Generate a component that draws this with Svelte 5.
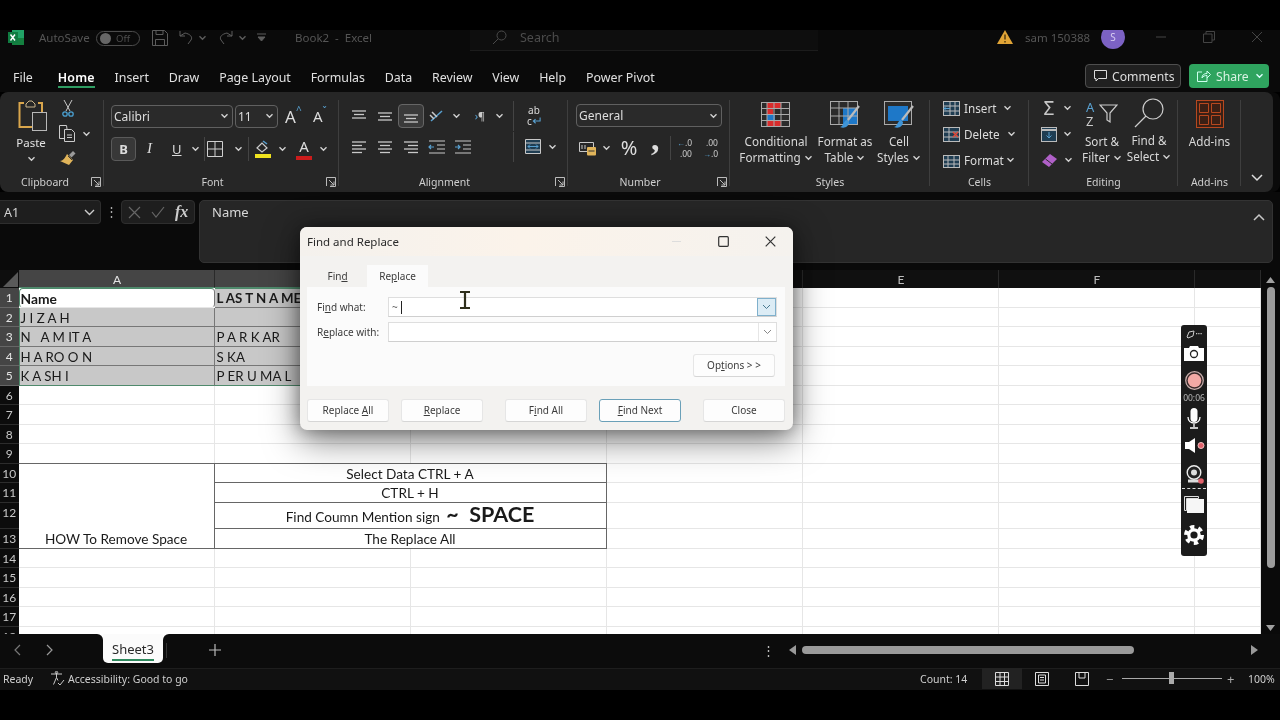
<script>
  const letters = ['A', 'B', 'C', 'D', 'E', 'F', ''];
  const rowNos = Array.from({ length: 18 }, (_, i) => i + 1);
  const names = {
    1: ['Name', 'L AS T N A ME'],
    2: ['J I Z A H', ''],
    3: ['N   A M IT A', 'P A R K AR'],
    4: ['H A RO O N', 'S KA'],
    5: ['K A SH I', 'P ER U MA L']
  };
  const tableRows = {
    10: 'Select Data CTRL + A',
    11: 'CTRL + H',
    13: 'The Replace All'
  };
  const tailCols = ['c', 'd', 'e', 'f', 'g'];
  const plainCols = ['a', 'b', 'c', 'd', 'e', 'f', 'g'];
  const tabs = ['Home', 'Insert', 'Draw', 'Page Layout', 'Formulas', 'Data', 'Review', 'View', 'Help', 'Power Pivot'];
</script>

{#snippet chev(col = '#d0d0d0')}
  <svg class="chev" width="9" height="6" viewBox="0 0 9 6"><path d="M1.5 1.2l3 3 3-3" fill="none" stroke={col} stroke-width="1.4" /></svg>
{/snippet}

{#snippet launcher()}
  <svg class="launcher" width="10" height="10" viewBox="0 0 10 10"><path d="M.5 9V.5H9.5V9.5H4M3 3l5 5M8 4.5V8H4.5" fill="none" stroke="#bbb" stroke-width="1" /></svg>
{/snippet}

{#snippet lines(rows)}
  <svg width="20" height="16" viewBox="0 0 20 16">
    {#each rows as r}
      <path d={`M${r[0]} ${r[2]}H${r[1]}`} stroke="#c8c8c8" stroke-width="1.3" />
    {/each}
  </svg>
{/snippet}

<div class="app">
  <header class="titlebar">
    <svg class="xl" width="16" height="15" viewBox="0 0 16 15"><rect x="4" width="12" height="15" fill="#21a366" /><rect x="4" y="8" width="12" height="7" fill="#14803f" /><rect width="10" height="11" y="2" fill="#107c41" /><path d="M2.5 4.5l4.5 6M7 4.5l-4.5 6" stroke="#fff" stroke-width="1.4" /></svg>
    <span class="dim autosave">AutoSave</span>
    <span class="toggle"><i></i><b>Off</b></span>
    <svg class="t-save" width="16" height="16" viewBox="0 0 16 16"><path d="M.5.5h12l3 3v12H.5zM4 .5v4h7v-4M3.500 15.500v-6h9v6" fill="none" stroke="#5c5c5c" /></svg>
    <svg class="t-undo" width="14" height="15" viewBox="0 0 14 15"><path d="M1 1v5h5M1 6l5-3c5 1 8 4 6 7l-3 4" fill="none" stroke="#5c5c5c" /></svg>
    <span class="t-chev">{@render chev('#5c5c5c')}</span>
    <svg class="t-redo" width="14" height="15" viewBox="0 0 14 15"><path d="M13 1v5H8M13 6L8 3C3 4 0 7 2 10l3 4" fill="none" stroke="#5c5c5c" /></svg>
    <span class="t-chev">{@render chev('#5c5c5c')}</span>
    <svg class="t-more" width="11" height="9" viewBox="0 0 11 9"><path d="M1 1h9M2 4l3.500 4L9 4z" stroke="#5c5c5c" fill="#5c5c5c" /></svg>
    <span class="dim doc">Book2 &nbsp;-&nbsp; Excel</span>
    <div class="search">
      <svg width="15" height="15" viewBox="0 0 15 15"><circle cx="9.500" cy="5.500" r="4.500" fill="none" stroke="#4a4a4a" /><path d="M6 9l-5 5" stroke="#4a4a4a" /></svg>
      <span>Search</span>
    </div>
    <svg class="warn" width="16" height="14" viewBox="0 0 16 14"><path d="M8 0l8 14H0z" fill="#e0a436" /><path d="M8 4.500v5M8 11v1.500" stroke="#3c2a0a" stroke-width="1.300" /></svg>
    <span class="dim user">sam 150388</span>
    <span class="avatar">S</span>
    <span class="winbtns">
      <svg width="12" height="12" viewBox="0 0 12 12"><path d="M1 6h10" stroke="#444" /></svg>
      <svg width="12" height="12" viewBox="0 0 12 12"><path d="M.5 3h8.500v8.500H.5zM3 3V.5h8.500V9H9" fill="none" stroke="#444" /></svg>
      <svg width="12" height="12" viewBox="0 0 12 12"><path d="M1 1l10 10M11 1L1 11" stroke="#444" /></svg>
    </span>
  </header>

  <nav class="tabs">
    <span class="file">File</span>
    {#each tabs as t}
      <span class:home={t === 'Home'}>{t}</span>
    {/each}
    <div class="tab-actions">
      <button class="comments">
        <svg width="13" height="12" viewBox="0 0 13 12"><path d="M.5.5h12v8H4.500L2 11V8.500H.5z" fill="none" stroke="#ddd" /></svg>
        Comments
      </button>
      <button class="share">
        <svg width="14" height="12" viewBox="0 0 14 12"><path d="M5 2H.5v9.500h9.500V8M5 8c0-3 2-4.500 5-4.500V1l3.500 3.500L10 8V5.500C8 5.500 6 6 5 8z" fill="none" stroke="#cfe" /></svg>
        Share
        <span class="share-chev">{@render chev('#dff')}</span>
      </button>
    </div>
  </nav>

  <section class="ribbon">
    <div class="group launch clipboard">
      <div class="gbody clipbody">
        <div class="paste">
          <svg width="30" height="31" viewBox="0 0 30 31"><path d="M6 3H1.500v24H14" fill="none" stroke="#d9a64c" stroke-width="2" /><path d="M20 3h4v9" fill="none" stroke="#d9a64c" stroke-width="2" /><path d="M8 4l3-3h3l3 3v3H8z" fill="#262626" stroke="#c9b48a" /><rect x="14.500" y="12.500" width="14" height="18" fill="#2a2a2a" stroke="#b8b8b8" /></svg>
          <span>Paste</span>
          {@render chev()}
        </div>
        <div class="clip-small">
          <svg width="12" height="17" viewBox="0 0 12 17"><path d="M2 0l6 11M10 0L4 11" stroke="#c8c8c8" /><circle cx="3" cy="14" r="2.200" fill="none" stroke="#4a9fd0" stroke-width="1.300" /><circle cx="9" cy="14" r="2.200" fill="none" stroke="#4a9fd0" stroke-width="1.300" /></svg>
          <span class="copyrow">
            <svg width="17" height="17" viewBox="0 0 17 17"><path d="M5 13.500H.5v-13h7L8 4" fill="none" stroke="#ccc" /><path d="M5.500 4.500h7l3 3v9h-10zM8 10h5M8 12.500h5" fill="none" stroke="#ccc" /></svg>
            {@render chev()}
          </span>
          <svg width="17" height="15" viewBox="0 0 17 15"><path d="M10 4l4-4 2.500 2.500-4 4z" fill="#9a9a9a" /><path d="M8 3l6 6-4 5-9-4c3 0 5-3 7-7z" fill="#e0b45a" /><path d="M9 5l4 4" stroke="#3a3a3a" /></svg>
        </div>
      </div>
      <div class="glabel">Clipboard</div>
      {@render launcher()}
    </div>

    <div class="group launch font">
      <div class="gbody stack">
        <div class="frow r1">
          <span class="sel-box fontname">Calibri {@render chev()}</span>
          <span class="sel-box fontsize">11 {@render chev()}</span>
          <span class="grow-a">A<sup>^</sup></span>
          <span class="shrink-a">A<sup>ˇ</sup></span>
        </div>
        <div class="frow r2">
          <span class="bold-btn">B</span>
          <span class="ital">I</span>
          <span class="under">U</span>
          {@render chev()}
          <span class="vsep first"></span>
          <svg class="borders" width="16" height="16" viewBox="0 0 16 16"><path d="M.5.5h15v15H.5zM.5 8h15M8 .5v15" fill="none" stroke="#d0d0d0" /></svg>
          {@render chev()}
          <span class="vsep second"></span>
          <svg class="fill" width="18" height="18" viewBox="0 0 18 18"><path d="M3 8l5-5 5 5-5 4z" fill="none" stroke="#ccc" stroke-width="1.200" /><path d="M9 1l4 3" stroke="#58a0d0" stroke-width="1.500" /><rect x="1" y="14" width="16" height="4" fill="#f0e31f" /></svg>
          {@render chev()}
          <span class="color-a">A<i></i></span>
          {@render chev()}
        </div>
      </div>
      <div class="glabel">Font</div>
      {@render launcher()}
    </div>

    <div class="group launch align">
      <div class="gbody stack alignbody">
        <div class="arow">
          <span class="w26">{@render lines([[3, 17, 3], [5, 15, 6.500], [3, 17, 10]])}</span>
          <span class="w26">{@render lines([[3, 17, 5], [5, 15, 8.500], [3, 17, 12]])}</span>
          <span class="w26 active">{@render lines([[3, 17, 7], [5, 15, 10.500], [3, 17, 14]])}</span>
          <span class="w26">
            <svg width="18" height="16" viewBox="0 0 18 16"><path d="M3 13L14 3" stroke="#58a0d0" stroke-width="1.500" /><path d="M4 4l5 5M2 7l4 4" stroke="#c8c8c8" stroke-width="1.500" /></svg>
          </span>
          <span class="w12">{@render chev()}</span>
          <span class="w26 gap5 rtl"><em>›</em>¶</span>
          <span class="w12">{@render chev()}</span>
          <span class="vsep asep"></span>
          <span class="w26 wrap">ab<br />c<svg width="9" height="8" viewBox="0 0 10 8"><path d="M9 0v4H2M4 2L1.500 4 4 6.500" fill="none" stroke="#58a0d0" stroke-width="1.200" /></svg></span>
        </div>
        <div class="arow">
          <span class="w26">{@render lines([[3, 17, 3], [3, 13, 6.500], [3, 17, 10], [3, 13, 13.500]])}</span>
          <span class="w26">{@render lines([[3, 17, 3], [5, 15, 6.500], [3, 17, 10], [5, 15, 13.500]])}</span>
          <span class="w26">{@render lines([[3, 17, 3], [7, 17, 6.500], [3, 17, 10], [7, 17, 13.500]])}</span>
          <span class="w26">
            <svg width="18" height="16" viewBox="0 0 18 16"><path d="M1 2h16M9 6h8M9 10h8M1 14h16" stroke="#c8c8c8" stroke-width="1.200" /><path d="M6 8H1M3 6L1 8l2 2" fill="none" stroke="#58a0d0" stroke-width="1.200" /></svg>
          </span>
          <span class="w26">
            <svg width="18" height="16" viewBox="0 0 18 16"><path d="M1 2h16M9 6h8M9 10h8M1 14h16" stroke="#c8c8c8" stroke-width="1.200" /><path d="M1 8h5M4 6l2 2-2 2" fill="none" stroke="#58a0d0" stroke-width="1.200" /></svg>
          </span>
          <span class="vsep asep2"></span>
          <span class="w26">
            <svg width="16" height="15" viewBox="0 0 16 15"><path d="M.5.5h15v14H.5z" fill="#1f3d52" stroke="#c8c8c8" /><path d="M.5 4h15M.5 11h15" stroke="#c8c8c8" /><path d="M3 7.500h10M5 5.500l-2 2 2 2M11 5.500l2 2-2 2" fill="none" stroke="#58a0d0" /></svg>
          </span>
          <span class="w12">{@render chev()}</span>
        </div>
      </div>
      <div class="glabel">Alignment</div>
      {@render launcher()}
    </div>

    <div class="group launch number">
      <div class="gbody stack">
        <span class="sel-box general">General {@render chev()}</span>
        <div class="nrow">
          <svg width="18" height="16" viewBox="0 0 18 16"><path d="M.5 2.500h14v9H.5z" fill="none" stroke="#c8c8c8" /><rect x="8" y="7" width="9" height="8.500" rx="1" fill="#e0b45a" /><path d="M3 5v4M6 5v4" stroke="#c8c8c8" /><path d="M9.500 11h6" stroke="#333" /></svg>
          {@render chev()}
          <span class="pct">%</span>
          <span class="comma">,</span>
          <span class="vsep nsep"></span>
          <span class="dec"><b>←</b>.0<br />.00</span>
          <span class="dec second">.00<br /><b>→</b>.0</span>
        </div>
      </div>
      <div class="glabel">Number</div>
      {@render launcher()}
    </div>

    <div class="group styles">
      <div class="gbody bigrow">
        <div class="big cf">
          <svg width="30" height="26" viewBox="0 0 30 26">
            <rect x=".5" y=".5" width="28" height="24" fill="#2b2b2b" stroke="#aaa" />
            <rect x="6" y="1" width="14" height="5" fill="#d92c2c" />
            <rect x="6" y="6" width="6" height="6" fill="#d92c2c" />
            <rect x="6" y="12" width="8" height="6" fill="#1e78c8" />
            <rect x="6" y="18" width="14" height="6" fill="#d92c2c" />
            <path d="M6 .5v24M13 .5v24M20 .5v24M.5 6.500h28M.5 12.500h28M.5 18.500h28" stroke="#aaa" fill="none" />
          </svg>
          <span>Conditional<br />Formatting {@render chev()}</span>
        </div>
        <div class="big ft">
          <svg width="30" height="28" viewBox="0 0 30 28">
            <rect x=".5" y=".5" width="27" height="23" fill="#2b2b2b" stroke="#aaa" />
            <rect x="13" y="7" width="14" height="16" fill="#1e78c8" />
            <path d="M.5 7h27M.5 15h27M9 .5v23M18 .5v23" stroke="#aaa" fill="none" />
            <path d="M29 5L18 19" stroke="#bbb" stroke-width="2.200" />
            <path d="M17 19c-4 1-3 6-7 7 5 2 9-1 9-5z" fill="#3f95d8" />
          </svg>
          <span>Format as<br />Table {@render chev()}</span>
        </div>
        <div class="big cs">
          <svg width="30" height="28" viewBox="0 0 30 28">
            <rect x=".5" y=".5" width="27" height="23" fill="#2b2b2b" stroke="#aaa" />
            <rect x="4" y="5" width="20" height="15" fill="#1e78c8" />
            <path d="M29 5L18 19" stroke="#bbb" stroke-width="2.200" />
            <path d="M17 19c-4 1-3 6-7 7 5 2 9-1 9-5z" fill="#3f95d8" />
          </svg>
          <span>Cell<br />Styles {@render chev()}</span>
        </div>
      </div>
      <div class="glabel">Styles</div>
    </div>

    <div class="group cells">
      <div class="gbody cellrows">
        <div class="crow">
          <svg width="17" height="15" viewBox="0 0 17 15"><rect x=".5" y=".5" width="16" height="14" fill="#1f3d52" stroke="#bbb" /><path d="M.5 5h16M.5 10h16M7 .5v14M12 .5v14" stroke="#bbb" /><path d="M7 7.500H1M3 5.500l-2 2 2 2" fill="none" stroke="#58a0d0" /></svg>
          <span>Insert</span>{@render chev()}
        </div>
        <div class="crow del">
          <svg width="17" height="15" viewBox="0 0 17 15"><rect x=".5" y=".5" width="16" height="14" fill="#1f3d52" stroke="#bbb" /><path d="M.5 5h16M.5 10h16M6 .5v14" stroke="#bbb" /><path d="M10 5l5 5M15 5l-5 5" stroke="#e04a3a" stroke-width="1.500" /></svg>
          <span>Delete</span>{@render chev()}
        </div>
        <div class="crow fmt">
          <svg width="17" height="15" viewBox="0 0 17 15"><rect x=".5" y="2.500" width="16" height="12" fill="#1f3d52" stroke="#bbb" /><path d="M.5 7h16M.5 11h16M5 2.500v12M11 2.500v12" stroke="#bbb" /></svg>
          <span>Format</span>{@render chev()}
        </div>
      </div>
      <div class="glabel">Cells</div>
    </div>

    <div class="group editing">
      <div class="gbody editbody">
        <div class="edit-small">
          <span><b class="sigma">Σ</b>{@render chev()}</span>
          <span><svg width="16" height="15" viewBox="0 0 16 15"><rect x=".5" y=".5" width="15" height="14" fill="#1f3d52" stroke="#bbb" /><path d="M.5 3h15" stroke="#bbb" stroke-width="2" /><path d="M8 5v6M5.500 8.500L8 11l2.500-2.500" fill="none" stroke="#58a0d0" /></svg>{@render chev()}</span>
          <span><svg width="17" height="15" viewBox="0 0 17 15"><path d="M1 9l8-8 7 5-8 8z" fill="#b060c8" /><path d="M4.500 6l6.500 5" stroke="#2a2a2a" /></svg>{@render chev()}</span>
        </div>
        <div class="big sf">
          <div class="az-wrap">
            <em class="az-a">A<br /><u>Z</u></em>
            <svg width="19" height="20" viewBox="0 0 19 20"><path d="M1 1h17l-7 8v9l-3-2V9z" fill="none" stroke="#ccc" stroke-width="1.200" /></svg>
          </div>
          <span>Sort &amp;<br />Filter {@render chev()}</span>
        </div>
        <div class="big fs">
          <svg width="32" height="30" viewBox="0 0 32 30"><circle cx="20" cy="11" r="10" fill="none" stroke="#ccc" stroke-width="1.200" /><path d="M13 18L2 29" stroke="#ccc" stroke-width="1.200" /></svg>
          <span>Find &amp;<br />Select {@render chev()}</span>
        </div>
      </div>
      <div class="glabel">Editing</div>
    </div>

    <div class="group addins">
      <div class="gbody bigrow">
        <div class="big ai">
          <svg width="28" height="28" viewBox="0 0 28 28"><rect x=".5" y=".5" width="27" height="27" fill="#3a2015" stroke="#b8481f" /><path d="M3.500 3.500h9v9h-9zM15.500 3.500h9v9h-9zM3.500 15.500h9v9h-9zM15.500 15.500h9v9h-9z" fill="none" stroke="#b8481f" /></svg>
          <span>Add-ins</span>
        </div>
      </div>
      <div class="glabel">Add-ins</div>
    </div>

    <div class="collapse">
      <svg width="12" height="8" viewBox="0 0 12 8"><path d="M1 1l5 5 5-5" fill="none" stroke="#ddd" stroke-width="1.500" /></svg>
    </div>
  </section>

  <section class="formula">
    <div class="namebox">A1 <svg width="11" height="7" viewBox="0 0 11 7"><path d="M1 1l4.500 4.500L10 1" fill="none" stroke="#ccc" stroke-width="1.400" /></svg></div>
    <span class="fdots">⋮</span>
    <div class="fxbox">
      <svg width="13" height="13" viewBox="0 0 13 13"><path d="M1 1l11 11M12 1L1 12" stroke="#666" stroke-width="1.200" /></svg>
      <svg width="14" height="12" viewBox="0 0 14 12"><path d="M1 6l4 5 8-10" fill="none" stroke="#666" stroke-width="1.200" /></svg>
      <i>fx</i>
    </div>
    <div class="fbar">
      <span>Name</span>
      <svg width="12" height="8" viewBox="0 0 12 8"><path d="M1 7l5-5 5 5" fill="none" stroke="#c8c8c8" stroke-width="1.500" /></svg>
    </div>
  </section>

  <section class="sheet">
    <div class="grid">
      <div class="corner"><svg width="16" height="16" viewBox="0 0 16 16"><path d="M16 1v15H1z" fill="#5a5a5a" /></svg></div>
      {#each letters as l, i}
        <div class="colhead" class:hot={i < 2}>{l}</div>
      {/each}

      {#each rowNos as r}
        <div class="rowhead" class:hot={r <= 5}>{r}</div>
        {#if r <= 5}
          <div class="cell name" class:bold={r === 1} class:active={r === 1} class:sel={r > 1} class:top={r === 1} class:bottom={r === 5}>{names[r][0]}</div>
          <div class="cell sel last" class:bold={r === 1} class:top={r === 1} class:bottom={r === 5}>{names[r][1]}</div>
          {#each tailCols as c}<div class="cell {c}"></div>{/each}
        {:else if r === 10}
          <div class="cell merged">HOW To Remove Space</div>
          <div class="cell tbl">{tableRows[r]}</div>
          {#each tailCols.slice(1) as c}<div class="cell {c}"></div>{/each}
        {:else if r === 12}
          <div class="cell tbl big-line">Find Coumn Mention sign <strong>~ &nbsp;SPACE</strong></div>
          {#each tailCols.slice(1) as c}<div class="cell {c}"></div>{/each}
        {:else if r === 11 || r === 13}
          <div class="cell tbl">{tableRows[r]}</div>
          {#each tailCols.slice(1) as c}<div class="cell {c}"></div>{/each}
        {:else}
          {#each plainCols as c}<div class="cell {c}"></div>{/each}
        {/if}
      {/each}
    </div>
    <div class="vscroll">
      <svg width="9" height="6" viewBox="0 0 9 6"><path d="M4.500 0L9 6H0z" fill="#a0a0a0" /></svg>
      <div class="vthumb"></div>
      <svg class="down" width="9" height="6" viewBox="0 0 9 6"><path d="M4.500 6L9 0H0z" fill="#a0a0a0" /></svg>
    </div>
  </section>

  <section class="tabbar">
    <div class="tb-left">
      <svg width="8" height="12" viewBox="0 0 8 12"><path d="M7 1L2 6l5 5" fill="none" stroke="#777" stroke-width="1.200" /></svg>
      <svg width="8" height="12" viewBox="0 0 8 12"><path d="M1 1l5 5-5 5" fill="none" stroke="#999" stroke-width="1.200" /></svg>
    </div>
    <div class="sheet-tab"><span>Sheet3</span></div>
    <div class="tb-right">
      <span class="tab-line"></span>
      <svg class="plus" width="12" height="12" viewBox="0 0 12 12"><path d="M6 0v12M0 6h12" stroke="#bbb" stroke-width="1.200" /></svg>
      <span class="tab-dots">⋮</span>
      <svg class="h-left" width="7" height="10" viewBox="0 0 7 10"><path d="M7 0v10L0 5z" fill="#999" /></svg>
      <div class="hthumb"></div>
      <svg class="h-right" width="7" height="10" viewBox="0 0 7 10"><path d="M0 0v10l7-5z" fill="#999" /></svg>
    </div>
  </section>

  <footer class="status">
    <div class="st-left">
      <span class="ready">Ready</span>
      <svg class="acc" width="15" height="15" viewBox="0 0 15 15"><path d="M1 3h11M6.500 1.500v5l-3 7M6.500 6.500l1.500 3M8 12l2 2 4-5" fill="none" stroke="#c8c8c8" /><circle cx="6.500" cy="1.500" r="1.200" fill="none" stroke="#c8c8c8" /></svg>
      <span>Accessibility: Good to go</span>
    </div>
    <span class="count">Count: 14</span>
    <span class="view on"><svg width="14" height="14" viewBox="0 0 14 14"><path d="M.5.500h13v13H.5zM.5 5h13M.5 9.500h13M5 .5v13M9.500 .5v13" fill="none" stroke="#ddd" /></svg></span>
    <span class="view"><svg width="14" height="14" viewBox="0 0 14 14"><path d="M.5.500h13v13H.5zM3.500 3h7v8h-7zM5 5.500h4M5 8h4" fill="none" stroke="#ddd" /></svg></span>
    <span class="view"><svg width="14" height="14" viewBox="0 0 14 14"><path d="M.5.500h13v13H.5zM4 .5v5.500h6V.5" fill="none" stroke="#ddd" /></svg></span>
    <span class="minus">−</span>
    <div class="slider"><i></i></div>
    <span class="zplus">+</span>
    <span class="zoom">100%</span>
  </footer>

  <div class="dialog">
    <div class="d-title">
      <span>Find and Replace</span>
      <span class="d-win">
        <svg width="11" height="11" viewBox="0 0 11 11"><path d="M1 5.500h9" stroke="#ddd" /></svg>
        <svg width="11" height="11" viewBox="0 0 11 11"><rect x=".7" y=".7" width="9.600" height="9.600" rx="1" fill="none" stroke="#333" stroke-width="1.200" /></svg>
        <svg width="11" height="11" viewBox="0 0 11 11"><path d="M.7 .7l9.600 9.600M10.300 .7L.7 10.300" stroke="#333" stroke-width="1.200" /></svg>
      </span>
    </div>
    <div class="d-tabs">
      <span class="d-tab first-tab">Fin<u>d</u></span>
      <span class="d-tab on">Re<u>p</u>lace</span>
    </div>
    <div class="d-panel">
      <div class="d-field">
        <label for="fw">Fi<u>n</u>d what:</label>
        <div class="d-input" id="fw"><span>~</span><i></i><span class="d-drop hot"><svg width="9" height="6" viewBox="0 0 9 6"><path d="M1 1l3.500 3.500L8 1" fill="none" stroke="#4a7a90" /></svg></span></div>
      </div>
      <div class="d-field">
        <label for="rw">R<u>e</u>place with:</label>
        <div class="d-input" id="rw"><span class="d-drop"><svg width="9" height="6" viewBox="0 0 9 6"><path d="M1 1l3.500 3.500L8 1" fill="none" stroke="#888" /></svg></span></div>
      </div>
      <div class="d-opt"><button class="d-btn">Op<u>t</u>ions &gt; &gt;</button></div>
    </div>
    <div class="d-actions">
      <button class="d-btn">Replace <u>A</u>ll</button>
      <button class="d-btn"><u>R</u>eplace</button>
      <button class="d-btn sp">F<u>i</u>nd All</button>
      <button class="d-btn next"><u>F</u>ind Next</button>
      <button class="d-btn sp">Close</button>
    </div>
    <svg class="ibeam" width="12" height="18" viewBox="0 0 12 18"><path d="M1 1h10M1 17h10M6 1v16" stroke="#2f2f1c" stroke-width="2.200" /></svg>
  </div>

  <aside class="recorder">
    <div class="rec-top">
      <svg width="9" height="9" viewBox="0 0 9 9"><path d="M1 7l2-5 5-1-1 5-5 2z" fill="none" stroke="#ccc" /></svg>
      <span>•••</span>
    </div>
    <svg class="r-cam" width="20" height="15" viewBox="0 0 20 15"><path d="M0 2h5l1-2h8l1 2h5v13H0z" fill="#fff" /><circle cx="10" cy="8" r="3.500" fill="#fff" stroke="#222" stroke-width="1.300" /></svg>
    <svg class="r-rec" width="19" height="19" viewBox="0 0 19 19"><circle cx="9.500" cy="9.500" r="8.800" fill="#3a2a2a" stroke="#c9b0ae" stroke-width="1.200" /><circle cx="9.500" cy="9.500" r="6.800" fill="#f2a9a5" /></svg>
    <span class="r-time">00:06</span>
    <svg class="r-mic" width="14" height="21" viewBox="0 0 14 21"><rect x="3.500" y="0" width="7" height="14" rx="3.500" fill="#fff" /><path d="M1 9c0 8 12 8 12 0M7 16v3M3 20h8" fill="none" stroke="#fff" stroke-width="1.300" /></svg>
    <svg class="r-spk" width="20" height="15" viewBox="0 0 20 15"><path d="M0 4h4l6-4v15l-6-4H0z" fill="#fff" /><circle cx="16" cy="7.500" r="3" fill="#e0606a" stroke="#f0c0c0" /></svg>
    <svg class="r-web" width="18" height="20" viewBox="0 0 18 20"><circle cx="8" cy="7.500" r="6.800" fill="#222" stroke="#eee" stroke-width="1.400" /><circle cx="8" cy="7.500" r="3" fill="#ddd" /><path d="M2 16h12" stroke="#ddd" stroke-width="3" /><circle cx="15" cy="16" r="2.800" fill="#e0606a" /></svg>
    <div class="r-dash"></div>
    <svg class="r-win" width="20" height="18" viewBox="0 0 20 18"><path d="M.5.500h14v2H2.500v12h-2z" fill="none" stroke="#ddd" /><rect x="3" y="3" width="17" height="14" fill="#f6f6f6" /></svg>
    <svg class="r-gear" width="20" height="20" viewBox="0 0 20 20"><circle cx="10" cy="10" r="7.800" fill="none" stroke="#fff" stroke-width="4.400" stroke-dasharray="4.200 3.970" /><circle cx="10" cy="10" r="5.200" fill="none" stroke="#fff" stroke-width="3.200" /></svg>
  </aside>
</div>

<style>
  :global(body) { margin: 0; background: #000; }
  .app {
    position: relative;
    width: 1280px;
    height: 720px;
    box-sizing: border-box;
    padding-top: 30px;
    background: #000;
    overflow: hidden;
    font-family: "Noto Sans", "Open Sans", sans-serif;
    color: #e2e2e2;
    filter: blur(0.45px);
    display: flex;
    flex-direction: column;
  }
  svg { display: block; flex: none; }
  button { font: inherit; }

  /* title bar */
  .titlebar {
    height: 30px;
    flex: none;
    background: #0a0a0a;
    display: flex;
    align-items: flex-start;
    font-size: 11.500px;
    line-height: 15px;
    overflow: hidden;
    position: relative;
  }
  .dim { color: #555; }
  .xl { margin: 0 0 0 8px; }
  .autosave { margin-left: 15px; width: 57px; }
  .toggle {
    width: 44px; height: 15px; box-sizing: border-box; border: 1px solid #4c4c4c; border-radius: 8px;
    margin-top: 1px; display: flex; align-items: center; gap: 5px; padding-left: 3px; color: #4e4e4e; font-size: 9.500px;
  }
  .toggle i { width: 11px; height: 11px; border-radius: 50%; background: #666; }
  .toggle b { font-weight: 400; }
  .t-save { margin: 0 0 0 12px; }
  .t-undo { margin-left: 11px; }
  .t-chev { margin: 5px 0 0 5px; width: 9px; }
  .t-redo { margin-left: 12px; }
  .t-more { margin: 3px 0 0 9px; }
  .doc { margin-left: 28px; width: 90px; white-space: nowrap; }
  .search {
    margin-left: 85px; width: 348px; height: 21px; box-sizing: border-box; border-bottom: 1px solid #1c1c1c;
    background: #0e0e0e; display: flex; align-items: flex-start; padding-left: 22px; gap: 13px; color: #4c4c4c; font-size: 12.500px;
  }
  .warn { margin-left: 179px; }
  .user { margin-left: 12px; width: 71px; font-size: 11.500px; white-space: nowrap; }
  .avatar {
    width: 24px; height: 24px; margin: -5px 0 0 5px; border-radius: 50%; background: #7c62c4; color: #d8cdf2;
    font-size: 10px; line-height: 24px; text-align: center; flex: none;
  }
  .winbtns { margin: 1px 0 0 30px; display: flex; gap: 36px; }

  /* tabs */
  .tabs {
    height: 32px; flex: none; background: #0a0a0a; display: flex; align-items: center; gap: 19.800px;
    padding-left: 13px; font-size: 12.400px; color: #e0e0e0; box-sizing: border-box; padding-top: 2px;
  }
  .file { margin-right: 5px; }
  .tabs .home { font-weight: 600; color: #fff; position: relative; letter-spacing: .25px; }
  .home::after { content: ""; position: absolute; left: 0; right: 0; bottom: -2px; height: 2px; background: #2f9e63; }
  .tab-actions { margin-left: auto; padding-right: 11px; display: flex; gap: 8px; }
  .comments, .share {
    height: 24px; box-sizing: border-box; display: flex; align-items: center; border-radius: 4px; font-size: 12.200px; padding: 0;
    margin-top: -2px;
  }
  .comments { width: 96px; background: #202020; border: 1px solid #4e4e4e; color: #dedede; gap: 5px; padding-left: 8px; }
  .share { width: 80px; background: #2fa45f; border: 0; color: #d8f2e2; gap: 5px; padding-left: 8px; }
  .share-chev { margin-left: 1px; }

  /* ribbon */
  .ribbon {
    width: 1273px; height: 100px; flex: none; box-sizing: border-box; background: #262626; border-radius: 8px;
    display: flex; font-size: 11.700px; color: #dcdcdc; position: relative; z-index: 0; box-shadow: 7px 0 0 #0a0a0a;
  }
  .group { position: relative; display: flex; flex-direction: column; flex: none; height: 100px; }
  .group::after { content: ""; position: absolute; right: 0; top: 8px; bottom: 6px; width: 1px; background: #3e3e3e; }
  .clipboard { width: 104px; }
  .font { width: 235px; }
  .align { width: 229px; }
  .number { width: 162px; }
  .styles { width: 200px; }
  .cells { width: 99px; }
  .editing { width: 149px; }
  .addins { width: 63px; }
  .gbody { flex: 1; min-height: 0; }
  .glabel { height: 20px; line-height: 20px; text-align: center; font-size: 10.500px; color: #cfcfcf; }
  .launch .glabel { padding-right: 18px; }
  .clipboard.launch .glabel { padding-right: 14px; }
  .launcher { position: absolute; right: 3px; bottom: 5px; }

  .clipbody { display: flex; }
  .paste { padding: 8px 0 0 6px; box-sizing: border-box; display: flex; flex-direction: column; align-items: center; margin-left: 6px; width: 44px; }
  .paste svg:first-child { margin-left: 3px; }
  .paste span { font-size: 11.500px; margin-top: 3px; line-height: 18px; color: #e2e2e2; }
  .paste .chev { margin-top: 4px; }
  .clip-small { margin-left: 9px; padding-top: 8px; display: flex; flex-direction: column; gap: 8px; align-items: flex-start; }
  .clip-small > svg:first-child { margin-left: 3px; }
  .copyrow { display: flex; align-items: center; gap: 6px; }
  .clip-small > svg:last-child { margin-top: 1px; }

  .stack { display: flex; flex-direction: column; padding-top: 12px; }
  .frow { display: flex; align-items: center; padding-left: 7px; }
  .r1 { height: 24px; }
  .r2 { height: 25px; margin-top: 8px; }
  .sel-box {
    height: 23px; box-sizing: border-box; border: 1px solid #606060; border-radius: 4px; display: flex; align-items: center;
    justify-content: space-between; padding: 0 3px 0 2px; font-size: 12px; color: #dedede; background: #2a2a2a;
  }
  .fontname { width: 122px; }
  .fontsize { width: 43px; margin-left: 2px; }
  .grow-a, .shrink-a { color: #dcdcdc; display: block; position: relative; }
  .grow-a { font-size: 17px; margin-left: 7px; width: 28px; }
  .shrink-a { font-size: 15px; width: 20px; }
  sup { font-size: 10px; color: #58a0d0; position: absolute; top: -2px; margin-left: 0; }
  .bold-btn {
    width: 25px; height: 24px; box-sizing: border-box; border: 1px solid #5a5a5a; border-radius: 4px; background: #383838;
    text-align: center; line-height: 22px; font-weight: 700; font-size: 13px;
  }
  .ital { font-family: "Liberation Serif", serif; font-style: italic; font-size: 15px; margin-left: 11px; width: 8px; }
  .under { font-size: 13px; text-decoration: underline; margin: 0 9px 0 17px; width: 10px; }
  .vsep { width: 1px; height: 24px; background: #444; flex: none; display: block; }
  .first { margin: 0 2px 0 4px; }
  .borders { margin-right: 11px; }
  .second { margin: 0 5px 0 5px; }
  .fill { margin-right: 6px; }
  .color-a { position: relative; width: 16px; font-size: 15px; line-height: 17px; margin: 0 7px 0 9px; text-align: center; color: #ddd; height: 22px; }
  .color-a i { position: absolute; left: 0; right: 0; bottom: 0; height: 4px; background: #cc1c1c; }

  .alignbody { padding: 11px 0 0 7px; gap: 6px; }
  .arow { display: flex; align-items: center; height: 25px; }
  .w26 { width: 26px; display: flex; justify-content: center; align-items: center; flex: none; height: 24px; box-sizing: border-box; }
  .w12 { width: 12px; display: flex; justify-content: center; flex: none; }
  .active { border: 1px solid #666; border-radius: 4px; background: #3a3a3a; }
  .gap5 { margin-left: 5px; }
  .rtl { font-size: 11px; color: #ccc; }
  .rtl em { color: #58a0d0; font-style: normal; }
  .asep { margin: 0 7px 0 8px; height: 30px; }
  .asep2 { margin: 0 6px 0 37px; height: 30px; }
  .wrap { display: block; font-size: 10px; line-height: 11px; text-align: center; padding-top: 1px; }
  .wrap svg { display: inline-block; }

  .general { width: 146px; margin-left: 8px; }
  .nrow { display: flex; align-items: center; margin-top: 8px; padding-left: 11px; height: 25px; }
  .nrow > .chev { margin-left: 5px; }
  .pct { font-size: 20px; margin-left: 6px; width: 24px; text-align: center; color: #ddd; line-height: 20px; }
  .comma { font-family: "Liberation Serif", serif; font-weight: 700; font-size: 34px; line-height: 6px; margin-left: 10px; width: 10px; height: 24px; display: block; }
  .nsep { margin: 0 6px 0 9px; }
  .dec { width: 15px; font-size: 8.500px; line-height: 11px; text-align: right; color: #ccc; white-space: nowrap; display: block; flex: none; }
  .dec.second { margin: 0 0 0 11px; }
  .dec b { color: #58a0d0; font-weight: 400; font-size: 8px; }

  .bigrow { display: flex; }
  .big { display: flex; flex-direction: column; align-items: center; padding-top: 9px; text-align: center; line-height: 16px; font-size: 11.700px; color: #d8d8d8; flex: none; }
  .big span { display: block; margin-top: 4px; white-space: nowrap; }
  .big span .chev { display: inline-block; vertical-align: 1px; }
  .cf { width: 86px; margin-left: 3px; padding-top: 10px; }
  .cf span { margin-top: 5px; }
  .ft { width: 60px; margin-left: -4px; }
  .cs { width: 48px; }

  .cellrows { display: flex; flex-direction: column; gap: 6px; padding: 6px 0 0 13px; }
  .crow { display: flex; align-items: center; height: 20px; gap: 4px; font-size: 11.700px; }
  .crow span { width: 35px; }
  .crow.del span { width: 39px; }
  .crow.fmt span { width: 38px; }

  .editbody { display: flex; }
  .edit-small { display: flex; flex-direction: column; gap: 6px; padding: 6px 0 0 12px; width: 46px; box-sizing: border-box; flex: none; }
  .edit-small span { display: flex; align-items: center; gap: 6px; height: 20px; }
  .sigma { font-weight: 400; font-size: 19px; line-height: 20px; width: 16px; color: #c8c8c8; text-align: center; }
  .sf { width: 50px; margin-left: 2px; padding-top: 7px; }
  .fs { width: 50px; margin-left: -3px; padding-top: 6px; }
  .sf span { margin-top: 5px; }
  .fs span { margin-top: 4px; }
  .az-wrap { display: flex; align-items: flex-end; height: 29px; gap: 0; }
  .az-a { font-style: normal; font-size: 13px; line-height: 14px; color: #58a0d0; width: 13px; text-align: left; }
  .az-a u { text-decoration: none; color: #ccc; }
  .az-wrap svg { margin-bottom: 4px; }
  .ai { width: 63px; padding-top: 8px; }
  .ai span { margin-top: 5px; }
  .collapse { flex: 1; position: relative; display: flex; align-items: flex-end; justify-content: center; padding-bottom: 10px; box-sizing: border-box; }

  /* formula */
  .formula { flex: none; display: flex; align-items: flex-start; background: #0a0a0a; font-size: 12.500px; padding-top: 8px; height: 78px; box-sizing: border-box; }
  .namebox { width: 101px; height: 24px; box-sizing: border-box; background: #1e1e1e; border: 1px solid #2e2e2e; border-left: 0; border-radius: 0 4px 4px 0; display: flex; align-items: center; justify-content: space-between; padding: 0 5px 0 4px; color: #d4d4d4; }
  .fdots { width: 20px; text-align: center; line-height: 24px; color: #aaa; }
  .fxbox { width: 74px; height: 24px; box-sizing: border-box; background: #1e1e1e; border: 1px solid #2e2e2e; border-radius: 4px; display: flex; align-items: center; gap: 10px; padding-left: 6px; }
  .fxbox i { font-family: "Liberation Serif", serif; font-size: 16px; color: #ccc; font-weight: 700; }
  .fbar { margin-left: 4px; width: 1074px; height: 63px; box-sizing: border-box; background: #262626; border: 1px solid #333; border-radius: 5px; display: flex; justify-content: space-between; padding: 2px 7px 0 12px; color: #d8d8d8; font-size: 13px; }
  .fbar svg { margin-top: 10px; }

  /* sheet */
  .sheet { height: 364px; flex: none; display: flex; background: #0a0a0a; }
  .grid {
    width: 1261px; height: 364px; overflow: hidden; display: grid; background: #fff;
    grid-template-columns: 18.500px repeat(6, 196px) 66.500px;
    grid-template-rows: 18px repeat(11, 19.500px) 26.500px repeat(6, 19.500px);
    font-family: Lato, "Noto Sans", sans-serif; font-size: 13.600px; color: #1a1a1a;
  }
  .corner { background: #0e0e0e; display: flex; align-items: flex-end; justify-content: flex-end; padding: 0 1px 1px 0; }
  .colhead { background: #101010; color: #bdbdbd; text-align: center; line-height: 19px; font-size: 12px; border-right: 1px solid #2a2a2a; padding-left: 2px; box-sizing: border-box; }
  .colhead.hot { background: #454545; color: #e4e4e4; border-bottom: 1px solid #4f8a6c; }
  .rowhead { background: #0c0c0c; color: #c8c8c8; text-align: center; font-size: 12px; line-height: 19px; border-bottom: 1px solid #2c2c2c; box-sizing: border-box; }
  .rowhead.hot { background: #454545; color: #e4e4e4; border-bottom-color: #666; }
  .cell { box-sizing: border-box; border-right: 1px solid #e6e6e6; border-bottom: 1px solid #e6e6e6; line-height: 20.500px; padding-left: 2px; white-space: pre; overflow: hidden; min-width: 0; }
  .cell.sel { background: #c8c8c8; border-color: #777; font-size: 13.300px; }
  .cell.name { border-right-color: #777; border-left: 1px solid #4f8a6c; padding-left: 1px; }
  .cell.last { border-right-color: #bbb; }
  .cell.active { background: #fff; }
  .cell.top { border-top: 1px solid #4f8a6c; line-height: 19.500px; }
  .cell.bottom { border-bottom: 1px solid #4f8a6c; }
  .cell.bold { font-weight: 700; font-size: 13.800px; }
  .cell.last.bold { font-size: 13.300px; }
  .merged {
    grid-row: span 4; border-top: 1px solid #666; border-bottom: 1px solid #666; border-right: 1px solid #666; display: flex;
    align-items: flex-end; justify-content: center; padding: 0; line-height: 18px; margin-top: -1px;
  }
  .tbl {
    grid-column: span 2; text-align: center; border-right: 1px solid #666; border-bottom: 1px solid #666; padding: 0;
    box-shadow: 0 -1px 0 #666;
  }
  .big-line { display: flex; align-items: flex-end; justify-content: center; gap: 3px; line-height: 21px; overflow: visible; }
  .big-line strong { font-size: 21.500px; line-height: 24px; margin-bottom: 2px; }

  .vscroll { width: 19px; display: flex; flex-direction: column; align-items: center; padding-top: 7px; box-sizing: border-box; }
  .vthumb { width: 8px; height: 281px; background: #9c9c9c; border-radius: 4px; margin-top: 4px; }
  .down { margin-top: auto; margin-bottom: 3px; }

  /* sheet tabs */
  .tabbar { height: 34px; flex: none; display: flex; background: linear-gradient(#fff 0 10px, #0c0c0c 10px); }
  .tb-left { width: 103px; background: #0c0c0c; border-radius: 0 6px 0 0; display: flex; gap: 25px; align-items: center; padding: 0 0 2px 13px; box-sizing: border-box; }
  .sheet-tab { width: 60px; height: 29px; background: #fbfbfb; border-radius: 0 0 5px 5px; color: #2a2a2a; font-size: 13px; display: flex; justify-content: center; }
  .sheet-tab span { line-height: 30px; border-bottom: 2px solid #2f8a5e; height: 25px; }
  .tb-right { flex: 1; background: #0c0c0c; border-radius: 6px 0 0 0; display: flex; align-items: center; padding-bottom: 2px; box-sizing: border-box; }
  .tab-line { width: 1px; height: 15px; background: #333; margin-left: 3px; }
  .plus { margin-left: 42px; }
  .tab-dots { margin-left: 541px; width: 10px; text-align: center; color: #bbb; font-size: 13px; }
  .h-left { margin-left: 17px; }
  .hthumb { width: 332px; height: 8px; border-radius: 4px; background: #9a9a9a; margin-left: 6px; }
  .h-right { margin-left: 117px; }

  /* status */
  .status { height: 22px; flex: none; display: flex; align-items: center; background: #111; border-top: 1px solid #1e1e1e; box-sizing: border-box; font-size: 10.500px; color: #cfcfcf; padding-bottom: 2px; }
  .st-left { width: 920px; display: flex; align-items: center; white-space: nowrap; flex: none; }
  .ready { margin-left: 3px; width: 47px; }
  .acc { margin-right: 3px; }
  .count { width: 62px; flex: none; }
  .view { width: 40px; height: 21px; display: flex; align-items: center; justify-content: center; flex: none; }
  .view.on { background: #222; }
  .minus { margin-left: 4px; width: 16px; color: #999; font-size: 13px; }
  .slider { width: 100px; height: 1px; background: #aaa; position: relative; flex: none; }
  .slider i { position: absolute; left: 47px; top: -6px; width: 5px; height: 12px; background: #aaa; }
  .zplus { margin-left: 5px; width: 21px; color: #aaa; font-size: 13px; }
  .zoom { width: 32px; white-space: nowrap; }

  /* dialog */
  .dialog {
    position: absolute; left: 300px; top: 227px; width: 493px; height: 203px; box-sizing: border-box; background: #f3f2f0;
    border-radius: 7px; box-shadow: 0 10px 35px rgba(0, 0, 0, 0.5), 0 0 18px rgba(0, 0, 0, 0.35);
    color: #3c3c3c; font-family: "Noto Sans", sans-serif; font-size: 10px; display: flex; flex-direction: column;
  }
  .d-title { height: 29px; flex: none; background: linear-gradient(90deg, #f4f1ed, #fbf3ea 45%, #f5f2ee); border-radius: 7px 7px 0 0; display: flex; align-items: center; justify-content: space-between; padding: 0 17px 0 7px; font-size: 11.500px; color: #2a2a2a; box-sizing: border-box; }
  .d-win { display: flex; gap: 36px; }
  .d-tabs { height: 31px; flex: none; display: flex; padding-left: 18px; align-items: flex-end; box-sizing: border-box; }
  .d-tab { width: 49px; height: 22px; line-height: 22px; text-align: center; box-sizing: border-box; }
  .first-tab { padding-right: 10px; }
  .d-tab.on { width: 61px; background: #fbfbfb; }
  .d-panel { margin: 0 8px 0 7px; background: #fbfbfb; height: 99px; flex: none; box-sizing: border-box; padding: 10px 8px 0 10px; }
  .d-field { display: flex; align-items: center; height: 20px; margin-bottom: 5px; }
  .d-field label { width: 71px; flex: none; }
  .d-input { flex: 1; height: 20px; box-sizing: border-box; background: #fff; border: 1px solid #dedede; border-bottom-color: #cfcfcf; display: flex; align-items: center; padding-left: 3px; gap: 3px; position: relative; color: #666; }
  .d-input i { width: 1px; height: 13px; background: #222; }
  .d-drop { position: absolute; right: 0; top: 0; bottom: 0; width: 17px; border-left: 1px solid #e6e6e6; display: flex; align-items: center; justify-content: center; }
  .d-drop.hot { background: #dcecf5; border: 1px solid #7fb0cc; }
  .d-opt { display: flex; justify-content: flex-end; margin-top: 12px; padding-right: 2px; }
  .d-btn { width: 82px; height: 23px; box-sizing: border-box; background: #fdfdfd; border: 1px solid #e6e6e6; border-bottom-color: #d6d6d6; border-radius: 3px; color: #3c3c3c; font-family: inherit; font-size: 10px; padding: 0 0 1px; }
  .d-actions { flex: 1; display: flex; align-items: flex-start; padding: 13px 0 0 7px; gap: 12px; }
  .sp { margin-left: 10px; }
  .next { border: 1.500px solid #6aa0b8; }
  .ibeam { position: absolute; left: 159px; top: 64px; }

  /* recorder */
  .recorder {
    position: absolute; left: 1181px; top: 325px; width: 26px; height: 231px; background: #1b1b1b; border-radius: 3px;
    display: flex; flex-direction: column; align-items: center; box-sizing: border-box; padding-top: 4px; color: #ccc;
  }
  .rec-top { display: flex; align-items: center; gap: 1px; font-size: 6px; height: 10px; line-height: 10px; }
  .r-cam { margin-top: 7px; }
  .r-rec { margin-top: 10px; }
  .r-time { font-size: 8.500px; line-height: 10px; margin-top: 3px; color: #b8b8b8; }
  .r-mic { margin-top: 5px; }
  .r-spk { margin-top: 9px; margin-left: 2px; }
  .r-web { margin-top: 12px; margin-left: 2px; }
  .r-dash { width: 24px; margin-top: 3px; border-top: 1px dashed #ddd; }
  .r-win { margin-top: 7px; }
  .r-gear { margin-top: 11px; }
</style>
